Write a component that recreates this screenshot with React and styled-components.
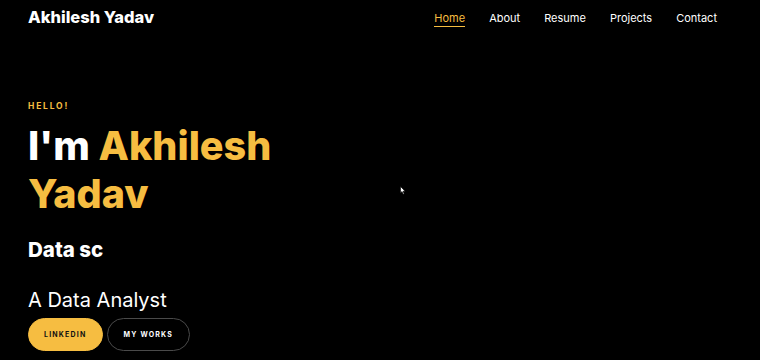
import React from 'react';
import styled, { createGlobalStyle } from 'styled-components';

const GlobalStyle = createGlobalStyle`
  html, body {
    margin: 0;
    padding: 0;
    background: #000;
  }
  body {
    font-family: "Inter", "DejaVu Sans", sans-serif;
    color: #fff;
    overflow: hidden;
  }
`;

const YELLOW = '#f6bd41';

const Page = styled.div`
  width: 760px;
  height: 360px;
  background: #000;
  position: relative;
  overflow: hidden;
`;

const Nav = styled.nav`
  display: flex;
  align-items: center;
  justify-content: space-between;
  height: 33px;
  padding: 0 43px 0 28px;
`;

const Logo = styled.div`
  font-weight: 800;
  font-size: 16.5px;
  letter-spacing: 0;
`;

const Links = styled.ul`
  display: flex;
  gap: 24px;
  list-style: none;
  margin: 0;
  padding: 0;
`;

const NavLink = styled.li`
  font-size: 11px;
  padding: 4px 0 1px;
  color: ${p => (p.active ? YELLOW : '#fff')};
  border-bottom: 1.5px solid ${p => (p.active ? YELLOW : 'transparent')};
`;

const Hero = styled.section`
  padding: 68px 28px 0;
  display: flex;
  flex-direction: column;
`;

const Hello = styled.div`
  color: ${YELLOW};
  font-size: 8.5px;
  font-weight: 700;
  letter-spacing: 1.8px;
`;

const Title = styled.h1`
  margin: 11px 0 0;
  font-size: 39.5px;
  font-weight: 800;
  line-height: 48px;
`;

const Accent = styled.span`
  color: ${YELLOW};
`;

const Role = styled.h2`
  margin: 19px 0 0;
  font-size: 20.5px;
  font-weight: 800;
`;

const Sub = styled.div`
  margin-top: 26px;
  font-size: 20px;
  font-weight: 400;
`;

const Buttons = styled.div`
  display: flex;
  gap: 4px;
  margin-top: 6px;
`;

const Button = styled.button`
  height: 33px;
  padding: 0 ${p => p.px}px;
  border-radius: 999px;
  font-family: inherit;
  font-size: 7px;
  font-weight: 700;
  letter-spacing: 1.2px;
  background: ${p => (p.primary ? YELLOW : 'transparent')};
  color: ${p => (p.primary ? '#111' : '#fff')};
  border: 1px solid ${p => (p.primary ? YELLOW : '#4a4a4a')};
`;

const Cursor = styled.svg`
  position: absolute;
  left: 400px;
  top: 186px;
`;

export default function App() {
  return (
    <Page>
      <GlobalStyle />
      <Nav>
        <Logo>Akhilesh Yadav</Logo>
        <Links>
          <NavLink active>Home</NavLink>
          <NavLink>About</NavLink>
          <NavLink>Resume</NavLink>
          <NavLink>Projects</NavLink>
          <NavLink>Contact</NavLink>
        </Links>
      </Nav>
      <Hero>
        <Hello>HELLO!</Hello>
        <Title>
          I'm <Accent>Akhilesh</Accent>
          <br />
          <Accent>Yadav</Accent>
        </Title>
        <Role>Data sc</Role>
        <Sub>A Data Analyst</Sub>
        <Buttons>
          <Button primary px={15}>LINKEDIN</Button>
          <Button px={16}>MY WORKS</Button>
        </Buttons>
      </Hero>
      <Cursor width="6" height="9" viewBox="0 0 6 9">
        <path d="M0.5 0.5 L0.5 7 L2 5.6 L3.2 8.2 L4.2 7.7 L3 5.2 L5.2 5.2 Z" fill="#fff" stroke="#000" strokeWidth="0.6" />
      </Cursor>
    </Page>
  );
}
